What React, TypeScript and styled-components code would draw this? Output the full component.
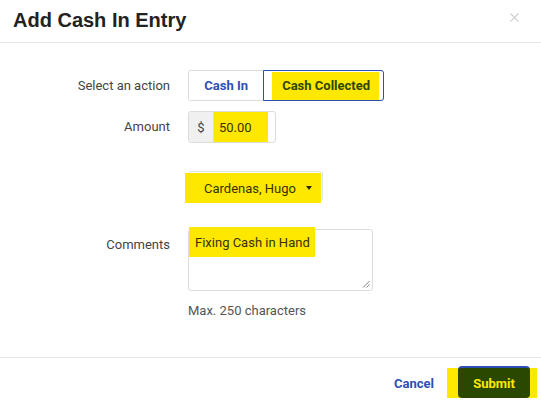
import styled, { createGlobalStyle } from "styled-components";

const GlobalStyle = createGlobalStyle`
  html, body {
    margin: 0;
    padding: 0;
    background: #fff;
  }
  body {
    font-family: Roboto, "Liberation Sans", Arial, sans-serif;
    font-size: 13px;
    color: #333;
  }
  * {
    box-sizing: border-box;
  }
`;

// 荧光笔标记的颜色
const HIGHLIGHT = "#ffe800";
const BLUE = "#2d4fb5";
const BLUE_ON_YELLOW = "#2d4700";
const TEXT_ON_YELLOW = "#363100";

const Modal = styled.div`
  width: 541px;
  height: 404px;
  display: flex;
  flex-direction: column;
  background: #fff;
`;

const Header = styled.header`
  height: 43px;
  display: flex;
  justify-content: space-between;
  align-items: flex-start;
  padding: 8px 0 0 13px;
  border-bottom: 1px solid #e8e8e8;
`;

const Title = styled.h2`
  margin: 0;
  font-family: "Liberation Sans", Arial, sans-serif;
  font-size: 20px;
  line-height: 24px;
  font-weight: 700;
  color: #222;
`;

const CloseButton = styled.button`
  border: 0;
  background: none;
  padding: 0;
  margin: 5px 22px 0 0;
  width: 9px;
  height: 9px;
  display: flex;
  cursor: pointer;
`;

const Body = styled.div`
  flex: 1;
  padding-top: 27px;
`;

const Row = styled.div<{ $gap?: number; $align?: string }>`
  display: grid;
  grid-template-columns: 170px 1fr;
  column-gap: 18px;
  align-items: ${(p) => p.$align ?? "center"};
  margin-top: ${(p) => p.$gap ?? 0}px;
`;

const Label = styled.label<{ $pad?: number }>`
  text-align: right;
  color: #444;
  line-height: 16px;
  padding-top: ${(p) => p.$pad ?? 0}px;
`;

const Toggle = styled.div`
  display: flex;
  width: 196px;
  height: 31px;
  border: 1px solid #dcdcdc;
  border-radius: 3px;
`;

const ToggleButton = styled.button<{ $active?: boolean; $width: number }>`
  width: ${(p) => p.$width}px;
  height: ${(p) => (p.$active ? "31px" : "29px")};
  margin: ${(p) => (p.$active ? "-1px -1px -1px 0" : "0")};
  padding: 0;
  display: flex;
  align-items: center;
  justify-content: center;
  border: ${(p) => (p.$active ? `1px solid ${BLUE}` : "0")};
  border-radius: ${(p) => (p.$active ? "0 3px 3px 0" : "3px 0 0 3px")};
  background: #fff;
  font-family: Roboto, "Liberation Sans", Arial, sans-serif;
  font-size: 13px;
  font-weight: 700;
  color: ${BLUE};
  cursor: pointer;
`;

const ActiveMark = styled.span`
  display: flex;
  align-items: center;
  height: 28px;
  padding: 0 9px 0 10px;
  margin-left: 4px;
  background: ${HIGHLIGHT};
  color: ${BLUE_ON_YELLOW};
`;

const InputGroup = styled.div`
  display: flex;
  width: 88px;
  height: 32px;
  border: 1px solid #dcdcdc;
  border-radius: 3px;
  overflow: hidden;
`;

const Addon = styled.span`
  width: 25px;
  display: flex;
  align-items: center;
  justify-content: center;
  background: #f0f0f0;
  border-right: 1px solid #dcdcdc;
  color: #444;
`;

const ValueMark = styled.span`
  display: flex;
  align-items: center;
  width: 54px;
  padding-left: 5px;
  background: ${HIGHLIGHT};
  color: ${TEXT_ON_YELLOW};
`;

const Dropdown = styled.button`
  width: 135px;
  height: 30px;
  padding: 0;
  display: flex;
  align-items: flex-start;
  border: 1px solid #e2e2e2;
  border-radius: 3px;
  background: #fff;
  font-family: Roboto, "Liberation Sans", Arial, sans-serif;
  font-size: 13px;
  color: ${TEXT_ON_YELLOW};
  cursor: pointer;
`;

const DropdownMark = styled.span`
  flex: none;
  display: flex;
  align-items: center;
  gap: 10px;
  width: 136px;
  height: 30px;
  margin: 1px 0 0 -4px;
  padding-left: 19px;
  background: ${HIGHLIGHT};
`;

const Caret = styled.span`
  width: 0;
  height: 0;
  border-left: 3px solid transparent;
  border-right: 3px solid transparent;
  border-top: 4px solid #2a2600;
`;

const TextArea = styled.div`
  position: relative;
  width: 185px;
  height: 62px;
  border: 1px solid #dcdcdc;
  border-radius: 3px;
`;

const CommentMark = styled.span`
  display: inline-flex;
  align-items: center;
  height: 30px;
  margin-top: -3px;
  padding: 0 5px 0 6px;
  background: ${HIGHLIGHT};
  color: ${TEXT_ON_YELLOW};
`;

const Grip = styled.svg`
  position: absolute;
  right: 2px;
  bottom: 2px;
`;

const Help = styled.div`
  color: #555;
  line-height: 16px;
`;

const Footer = styled.footer`
  height: 47px;
  border-top: 1px solid #e8e8e8;
  display: flex;
  justify-content: flex-end;
  align-items: flex-start;
  padding: 10px 4px 0 0;
`;

const CancelButton = styled.button`
  border: 0;
  background: none;
  height: 30px;
  padding: 0;
  margin-right: 13px;
  font-family: Roboto, "Liberation Sans", Arial, sans-serif;
  font-size: 13px;
  font-weight: 700;
  color: ${BLUE};
  cursor: pointer;
`;

const SubmitMark = styled.span`
  display: flex;
  height: 30px;
  padding: 0 7px 0 11px;
  background: ${HIGHLIGHT};
`;

const SubmitButton = styled.button`
  width: 72px;
  height: 32px;
  margin-top: -2px;
  border: 0;
  border-top: 2px solid ${BLUE};
  border-radius: 4px;
  background: #2b4800;
  font-family: Roboto, "Liberation Sans", Arial, sans-serif;
  font-size: 13px;
  font-weight: 700;
  color: ${HIGHLIGHT};
  cursor: pointer;
`;

export default function App() {
  return (
    <>
      <GlobalStyle />
      <Modal>
        <Header>
          <Title>Add Cash In Entry</Title>
          <CloseButton aria-label="Close">
            <svg width="9" height="9" viewBox="0 0 9 9">
              <path d="M0.5 0.5 L8.5 8.5 M8.5 0.5 L0.5 8.5" stroke="#cfcfcf" strokeWidth="1.1" />
            </svg>
          </CloseButton>
        </Header>
        <Body>
          <Row>
            <Label>Select an action</Label>
            <Toggle>
              <ToggleButton $width={75}>Cash In</ToggleButton>
              <ToggleButton $width={122} $active>
                <ActiveMark>Cash Collected</ActiveMark>
              </ToggleButton>
            </Toggle>
          </Row>
          <Row $gap={10}>
            <Label>Amount</Label>
            <InputGroup>
              <Addon>$</Addon>
              <ValueMark>50.00</ValueMark>
            </InputGroup>
          </Row>
          <Row $gap={28}>
            <span />
            <div>
              <Dropdown>
                <DropdownMark>
                  Cardenas, Hugo
                  <Caret />
                </DropdownMark>
              </Dropdown>
            </div>
          </Row>
          <Row $gap={28} $align="start">
            <Label $pad={8}>Comments</Label>
            <TextArea>
              <CommentMark>Fixing Cash in Hand</CommentMark>
              <Grip width="8" height="8" viewBox="0 0 8 8">
                <path d="M7.5 1 L1 7.5 M7.5 4.5 L4.5 7.5" stroke="#777" strokeWidth="0.9" />
              </Grip>
            </TextArea>
          </Row>
          <Row $gap={12}>
            <span />
            <Help>Max. 250 characters</Help>
          </Row>
        </Body>
        <Footer>
          <CancelButton>Cancel</CancelButton>
          <SubmitMark>
            <SubmitButton>Submit</SubmitButton>
          </SubmitMark>
        </Footer>
      </Modal>
    </>
  );
}
